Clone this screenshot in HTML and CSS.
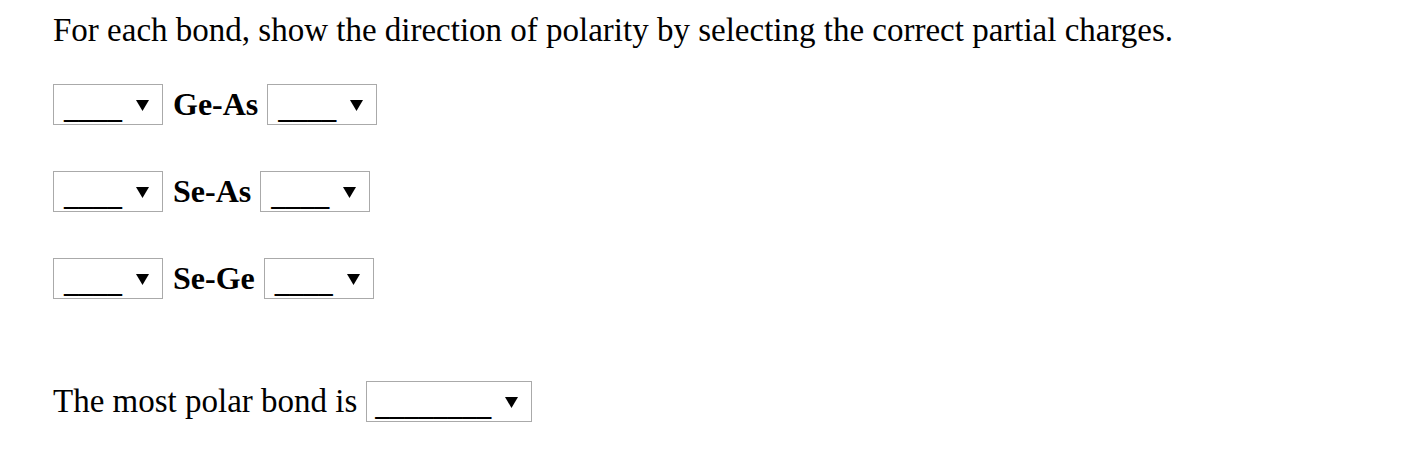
FILE: index.html
```html
<!DOCTYPE html>
<html lang="en">
<head>
    <meta charset="UTF-8">
    <meta name="viewport" content="width=device-width, initial-scale=1.0">
    <title>Bond Polarity</title>
    <link rel="stylesheet" href="styles.css">
</head>
<body>
    <div class="question">
        <p class="prompt">For each bond, show the direction of polarity by selecting the correct partial charges.</p>

        <div class="bond-row">
            <span class="pick"><span class="blank">____</span><svg class="arrow" viewBox="0 0 13 11"><polygon points="0,0 13,0 6.5,11"/></svg></span>
            <span class="bond">Ge-As</span>
            <span class="pick"><span class="blank">____</span><svg class="arrow" viewBox="0 0 13 11"><polygon points="0,0 13,0 6.5,11"/></svg></span>
        </div>

        <div class="bond-row">
            <span class="pick"><span class="blank">____</span><svg class="arrow" viewBox="0 0 13 11"><polygon points="0,0 13,0 6.5,11"/></svg></span>
            <span class="bond">Se-As</span>
            <span class="pick"><span class="blank">____</span><svg class="arrow" viewBox="0 0 13 11"><polygon points="0,0 13,0 6.5,11"/></svg></span>
        </div>

        <div class="bond-row">
            <span class="pick"><span class="blank">____</span><svg class="arrow" viewBox="0 0 13 11"><polygon points="0,0 13,0 6.5,11"/></svg></span>
            <span class="bond">Se-Ge</span>
            <span class="pick"><span class="blank">____</span><svg class="arrow" viewBox="0 0 13 11"><polygon points="0,0 13,0 6.5,11"/></svg></span>
        </div>

        <div class="polar-row">
            <span>The most polar bond is</span>
            <span class="pick wide"><span class="blank">________</span><svg class="arrow" viewBox="0 0 13 11"><polygon points="0,0 13,0 6.5,11"/></svg></span>
        </div>
    </div>
</body>
</html>
```

FILE: styles.css
```css
body {
    margin: 0;
    font-family: "Liberation Serif", "Times New Roman", serif;
    color: #000;
    background: #fff;
}

.question {
    padding: 9px 0 0 53px;
}

.prompt {
    margin: 0 0 33px;
    font-size: 33px;
    line-height: 42px;
}

.bond-row,
.polar-row {
    display: flex;
    align-items: center;
    gap: 10px;
}

.bond-row {
    margin-bottom: 46px;
}

.polar-row {
    margin-top: 82px;
    font-size: 33px;
    gap: 9px;
}

.pick {
    box-sizing: border-box;
    display: flex;
    align-items: center;
    justify-content: space-between;
    width: 110px;
    height: 41px;
    padding: 0 13px 0 10px;
    border: 1px solid #aaa;
    font-weight: bold;
    font-size: 29px;
}

.pick.wide {
    width: 166px;
    padding-left: 8px;
}

.blank {
    line-height: 1;
    margin-top: 8px;
}

.arrow {
    width: 13px;
    height: 11px;
    margin-top: 2px;
}

.bond {
    margin-right: -1px;
    font-size: 32px;
    font-weight: bold;
}
```
